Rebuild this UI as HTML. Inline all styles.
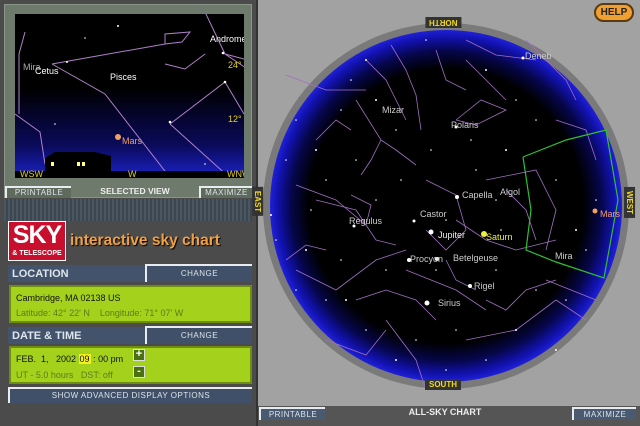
<!DOCTYPE html>
<html><head><style>
*{margin:0;padding:0;box-sizing:border-box}
body{width:640px;height:426px;overflow:hidden;background:#4b4b4b;font-family:"Liberation Sans",sans-serif;position:relative}
.a{position:absolute}
.btn{position:absolute;background:#3f5068;border-top:2px solid #e8ecf0;border-left:2px solid #e8ecf0;color:#dde3ea;font-size:8px;text-align:center;letter-spacing:.5px}
.hdr{position:absolute;background:#43536b;color:#dfe5ec;font-weight:bold;font-size:11px;padding:3px 4px}
.green{position:absolute;background:#a4d21c;border:2px solid #6d8c12;font-size:9px;color:#111}
.dim{color:#5d7a18}
.lbl{position:absolute;background:#333;color:#f0d820;font-weight:bold;font-size:8px;padding:1px 4px}
.s{position:absolute;color:#ccc;font-size:9px}
</style></head><body>
<div class="a" style="left:4px;top:4px;width:248px;height:194px;background:#6e7a6b;border:1px solid #8a958a"></div>
<div class="a" style="left:15px;top:14px;width:229px;height:164px;background:linear-gradient(#000 0%,#000 45%,#0a0a5a 80%,#1b22c8 100%);overflow:hidden">
<svg width="229" height="164" style="position:absolute;left:0;top:0">
<g stroke="#b080c8" stroke-width="1" fill="none">
<polyline points="10,18 4,40 4,100"/><polyline points="37,50 150,30 167,28 175,18 150,20 150,30"/>
<polyline points="37,50 90,80 160,170"/><polyline points="190,-2 210,40 240,60"/><polyline points="210,40 229,45"/>
<polyline points="155,110 210,68 229,100"/><polyline points="155,110 215,164"/><polyline points="0,100 25,118 30,150"/>
<polyline points="190,40 170,55 150,50"/>
</g>
<g fill="#fff"><circle cx="103" cy="12" r="1"/><circle cx="52" cy="48" r="1"/><circle cx="208" cy="39" r="1.3"/><circle cx="155" cy="108" r="1.3"/><circle cx="210" cy="68" r="1.3"/><circle cx="70" cy="24" r=".8"/><circle cx="40" cy="110" r=".8"/><circle cx="190" cy="150" r=".8"/></g>
<circle cx="103" cy="123" r="3" fill="#f0a060"/>
<path d="M30 164 L30 144 L40 138 L80 138 L96 142 L96 164Z" fill="#000"/><rect x="36" y="148" width="3" height="4" fill="#ff8"/><rect x="62" y="148" width="3" height="4" fill="#ff8"/><rect x="67" y="148" width="3" height="4" fill="#ff8"/>
<rect x="0" y="157" width="229" height="7" fill="#000"/>
</svg>
<div class="a" style="left:95px;top:58px;color:#fff;font-size:9px">Pisces</div>
<div class="a" style="left:20px;top:52px;color:#fff;font-size:9px">Cetus</div>
<div class="a" style="left:8px;top:48px;color:#aaa;font-size:9px">Mira</div>
<div class="a" style="left:195px;top:20px;color:#fff;font-size:9px">Andromeda</div>
<div class="a" style="left:213px;top:46px;color:#e0d020;font-size:9px">24°</div>
<div class="a" style="left:213px;top:100px;color:#e0d020;font-size:9px">12°</div>
<div class="a" style="left:107px;top:122px;color:#f0a070;font-size:9px">Mars</div>
<div class="a" style="left:5px;top:155px;color:#e0d020;font-size:9px">WSW</div>
<div class="a" style="left:113px;top:155px;color:#e0d020;font-size:9px">W</div>
<div class="a" style="left:212px;top:155px;color:#e0d020;font-size:9px">WNW</div>
</div>
<div class="btn" style="left:5px;top:186px;width:66px;height:12px;background:#5d6a5c;line-height:10px">PRINTABLE</div>
<div class="a" style="left:72px;top:186px;width:126px;color:#eee;font-size:8.5px;font-weight:bold;text-align:center">SELECTED VIEW</div>
<div class="btn" style="left:199px;top:186px;width:53px;height:12px;background:#5d6a5c;line-height:10px">MAXIMIZE</div>
<div class="a" style="left:4px;top:199px;width:248px;height:22px;background:repeating-linear-gradient(90deg,#4a5660 0 2px,#3c4650 2px 4px)"></div>
<div class="a" style="left:8px;top:221px;width:58px;height:40px;background:#c8102e;border:1px solid #fff;color:#fff;font-weight:bold;text-align:center">
<div style="font-size:25px;line-height:27px;letter-spacing:-1px">SKY</div><div style="font-size:7px;line-height:9px">&amp; TELESCOPE</div></div>
<div class="a" style="left:70px;top:232px;color:#f0a040;font-weight:bold;font-size:15.5px;text-shadow:1px 1px 1px #000">interactive sky chart</div>
<div class="hdr" style="left:8px;top:265px;width:138px;height:17px">LOCATION</div>
<div class="btn" style="left:145px;top:264px;width:107px;height:18px;line-height:15px">CHANGE</div>
<div class="green" style="left:9px;top:285px;width:243px;height:38px;padding:4px 5px;line-height:15px">Cambridge, MA 02138 US<br><span class="dim">Latitude: 42° 22' N &nbsp;&nbsp; Longitude: 71° 07' W</span></div>
<div class="hdr" style="left:8px;top:327px;width:138px;height:17px">DATE &amp; TIME</div>
<div class="btn" style="left:145px;top:326px;width:107px;height:18px;line-height:15px">CHANGE</div>
<div class="green" style="left:9px;top:346px;width:243px;height:38px;padding:3px 5px;line-height:16px;white-space:nowrap">FEB.&nbsp; 1,&nbsp;&nbsp; 2002 <span style="background:#f4f020;padding:0 1px">09</span> : 00 pm<br><span class="dim">UT - 5.0 hours&nbsp;&nbsp; DST: off</span></div>
<div class="a" style="left:133px;top:349px;width:12px;height:12px;background:#4a7010;border:1px solid #ddd;color:#fff;font-size:11px;line-height:9px;text-align:center;font-weight:bold">+</div>
<div class="a" style="left:133px;top:366px;width:12px;height:12px;background:#4a7010;border:1px solid #ddd;color:#fff;font-size:11px;line-height:9px;text-align:center;font-weight:bold">-</div>
<div class="btn" style="left:8px;top:387px;width:244px;height:16px;line-height:13px">SHOW ADVANCED DISPLAY OPTIONS</div>
<!-- right panel -->
<div class="a" style="left:256px;top:0;width:384px;height:426px;background:#a2a2a2;border-left:2px solid #333"></div>
<div class="a" style="left:594px;top:3px;width:40px;height:19px;border-radius:10px;background:#f0a030;border:2px solid #5a3a10;color:#222;font-weight:bold;font-size:10px;text-align:center;line-height:15px">HELP</div>
<div class="a" style="left:263px;top:23px;width:366px;height:366px;border-radius:50%;background:#7a7a7a"></div>
<div class="a" style="left:270px;top:30px;width:352px;height:352px;border-radius:50%;background:radial-gradient(circle closest-side,#000 0%,#000 78%,#06064a 88%,#1212b0 96%,#2020d8 100%)"></div>
<svg class="a" style="left:256px;top:0" width="384" height="426">
<g stroke="#a070c0" stroke-width="0.8" fill="none">
<polyline points="30,75 70,90 110,90"/><polyline points="100,100 125,140 140,150 160,165"/><polyline points="125,140 115,160 105,175"/>
<polyline points="40,185 80,200 110,225 115,205 95,195"/><polyline points="180,50 190,80 210,90"/><polyline points="210,40 240,55 280,60"/>
<polyline points="200,120 225,100 250,110 220,125 200,120"/><polyline points="170,180 200,195 210,230 190,250 170,230"/>
<polyline points="230,180 280,170 300,210 290,250"/><polyline points="40,270 80,290 120,260 150,250"/><polyline points="150,270 200,290 230,310"/>
<polyline points="130,320 160,360 170,390"/><polyline points="210,340 260,330 300,300 330,320"/><polyline points="300,120 330,130 340,160"/>
<polyline points="60,200 100,210 120,240 140,245"/><polyline points="200,220 230,240 260,250 300,240"/><polyline points="190,260 200,280 220,290"/>
<polyline points="270,40 310,80 320,100"/><polyline points="70,340 110,355 130,330"/><polyline points="290,280 340,300"/>
<polyline points="135,45 150,70 160,95 165,130"/><polyline points="110,60 130,80 150,120"/><polyline points="60,140 80,120 95,130"/>
<polyline points="250,190 270,210 280,240"/><polyline points="210,60 240,90 250,100"/><polyline points="30,260 50,245 70,250"/>
<polyline points="100,300 130,290 160,300 180,320"/><polyline points="230,300 250,310 270,290 300,280"/>
</g>
<polyline points="267,157 310,140 350,130 362,200 348,278 300,262 270,250 275,210 267,157" fill="none" stroke="#30c030" stroke-width="1.2"/>
<g fill="#fff"><circle cx="15" cy="215" r="1"/><circle cx="98" cy="226" r="1.5"/><circle cx="201" cy="197" r="2"/><circle cx="175" cy="232" r="2.5"/><circle cx="153" cy="260" r="2"/><circle cx="181" cy="259" r="2"/><circle cx="214" cy="286" r="2"/><circle cx="171" cy="303" r="2.5"/><circle cx="200" cy="127" r="1.5"/><circle cx="267" cy="58" r="1.5"/><circle cx="158" cy="221" r="1.5"/>
<circle cx="60" cy="150" r="1"/><circle cx="120" cy="100" r="1"/><circle cx="250" cy="150" r="1"/><circle cx="90" cy="300" r="1"/><circle cx="140" cy="360" r="1"/><circle cx="300" cy="350" r="1"/><circle cx="230" cy="70" r="1"/><circle cx="50" cy="250" r="1"/><circle cx="320" cy="230" r="1"/><circle cx="260" cy="330" r="1"/><circle cx="110" cy="60" r="1"/>
<circle cx="85" cy="110" r=".8"/><circle cx="145" cy="180" r=".8"/><circle cx="175" cy="150" r=".8"/><circle cx="220" cy="170" r=".8"/><circle cx="240" cy="200" r=".8"/><circle cx="190" cy="220" r=".8"/><circle cx="120" cy="200" r=".8"/><circle cx="70" cy="180" r=".8"/><circle cx="40" cy="120" r=".8"/><circle cx="100" cy="160" r=".8"/><circle cx="280" cy="120" r=".8"/><circle cx="300" cy="180" r=".8"/><circle cx="330" cy="250" r=".8"/><circle cx="280" cy="290" r=".8"/><circle cx="240" cy="270" r=".8"/><circle cx="200" cy="330" r=".8"/><circle cx="160" cy="340" r=".8"/><circle cx="110" cy="330" r=".8"/><circle cx="70" cy="300" r=".8"/><circle cx="40" cy="290" r=".8"/><circle cx="130" cy="270" r=".8"/><circle cx="230" cy="360" r=".8"/><circle cx="190" cy="370" r=".8"/><circle cx="170" cy="40" r=".8"/><circle cx="140" cy="130" r=".8"/><circle cx="260" cy="100" r=".8"/><circle cx="310" cy="300" r=".8"/><circle cx="85" cy="260" r=".8"/><circle cx="215" cy="140" r=".8"/><circle cx="180" cy="270" r=".8"/><circle cx="245" cy="230" r=".8"/><circle cx="55" cy="210" r=".8"/><circle cx="30" cy="160" r=".8"/><circle cx="340" cy="200" r=".8"/><circle cx="20" cy="240" r=".8"/><circle cx="95" cy="80" r=".8"/></g>
<circle cx="228" cy="234" r="3" fill="#f0f040"/><circle cx="339" cy="211" r="2.5" fill="#f0a060"/>
</svg>
<div class="s" style="left:525px;top:51px">Deneb</div>
<div class="s" style="left:382px;top:105px">Mizar</div>
<div class="s" style="left:451px;top:120px">Polaris</div>
<div class="s" style="left:462px;top:190px">Capella</div>
<div class="s" style="left:500px;top:187px">Algol</div>
<div class="s" style="left:349px;top:216px">Regulus</div>
<div class="s" style="left:420px;top:209px">Castor</div>
<div class="s" style="left:438px;top:230px;color:#eee">Jupiter</div>
<div class="s" style="left:486px;top:232px;color:#f0f040">Saturn</div>
<div class="s" style="left:410px;top:254px">Procyon</div>
<div class="s" style="left:453px;top:253px">Betelgeuse</div>
<div class="s" style="left:474px;top:281px">Rigel</div>
<div class="s" style="left:438px;top:298px">Sirius</div>
<div class="s" style="left:555px;top:251px">Mira</div>
<div class="s" style="left:600px;top:209px;color:#f0a070">Mars</div>
<div class="lbl" style="left:425px;top:17px;transform:rotate(180deg)">NORTH</div>
<div class="lbl" style="left:425px;top:379px">SOUTH</div>
<div class="lbl" style="left:243px;top:196px;transform:rotate(90deg)">EAST</div>
<div class="lbl" style="left:614px;top:197px;transform:rotate(90deg)">WEST</div>
<div class="a" style="left:258px;top:406px;width:382px;height:20px;background:#555"></div>
<div class="btn" style="left:259px;top:407px;width:66px;height:13px;background:#4a5a70;line-height:11px">PRINTABLE</div>
<div class="a" style="left:370px;top:407px;width:150px;color:#eee;font-size:9px;font-weight:bold;text-align:center">ALL-SKY CHART</div>
<div class="btn" style="left:572px;top:407px;width:64px;height:13px;background:#4a5a70;line-height:11px">MAXIMIZE</div>
</body></html>
